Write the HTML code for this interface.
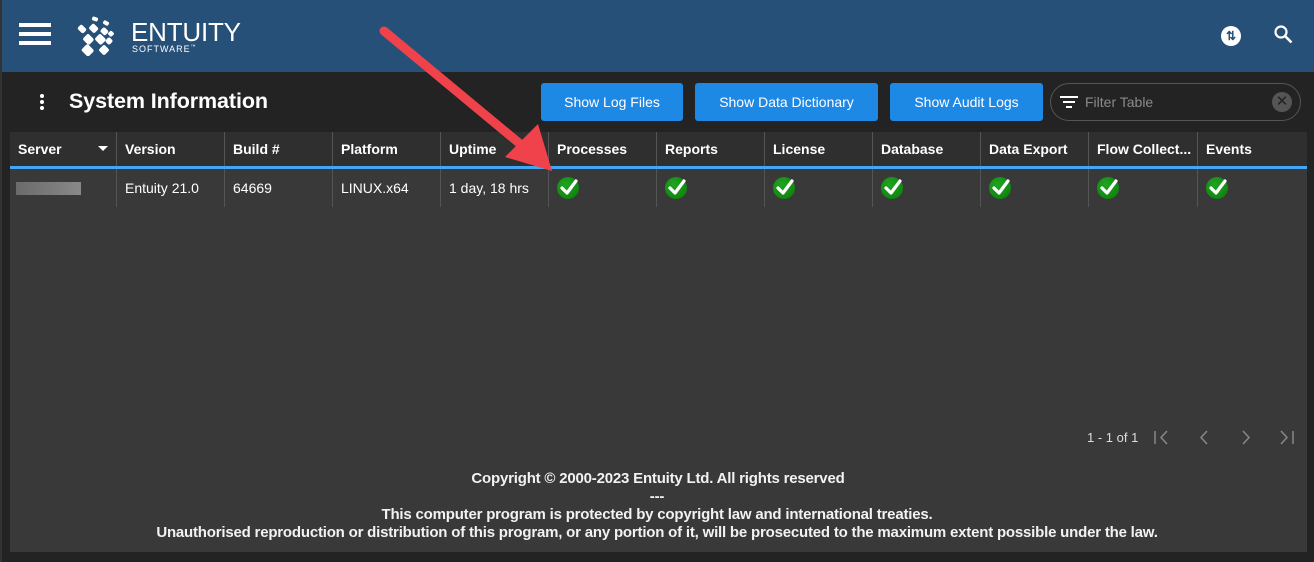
<!DOCTYPE html>
<html><head><meta charset="utf-8"><style>
*{margin:0;padding:0;box-sizing:border-box}
body{width:1314px;height:562px;background:#232323;font-family:"Liberation Sans",sans-serif;position:relative;overflow:hidden;color:#fff}
.hdr{position:absolute;left:0;top:0;width:1314px;height:72px;background:#265077}
.abs{position:absolute}
.btn{position:absolute;top:83px;height:38px;background:#1e88e5;border-radius:3px;color:#fff;font-size:14px;text-align:center;line-height:38px}
.panel{position:absolute;left:10px;top:132px;width:1297px;height:420px;background:#393939}
.th{position:absolute;top:0;height:34px;background:#2f2f2f;font-weight:bold;font-size:14px;line-height:34px;padding-left:8px;border-right:1px solid #555}
.td{position:absolute;top:37px;height:38px;font-size:14px;line-height:38px;padding-left:8px;border-right:1px solid #555}
.ck{position:absolute;top:8px;left:8px;width:22px;height:22px;border-radius:50%;background:radial-gradient(circle at 40% 35%,#1fa51f,#0b7a0b)}
.copy{position:absolute;left:0;width:1314px;text-align:center;font-weight:bold;font-size:15px;letter-spacing:-0.2px;color:#f2f2f2}
</style></head><body>
<div class="hdr"></div>
<div class="abs" style="left:0;top:0;width:2px;height:562px;background:#333"></div>
<div class="abs" style="left:19px;top:23px;width:32px;height:4px;background:#fff"></div>
<div class="abs" style="left:19px;top:32px;width:32px;height:4px;background:#fff"></div>
<div class="abs" style="left:19px;top:41px;width:32px;height:4px;background:#fff"></div>
<svg class="abs" style="left:74px;top:14px" width="50" height="42" viewBox="0 0 50 42">
<g fill="#fff">
<rect x="18" y="3" width="6" height="4" rx="1.5" transform="rotate(20 21 5)"/>
<rect x="29" y="7" width="6" height="4" rx="1.5" transform="rotate(30 32 9)"/>
<rect x="4" y="12" width="8" height="6" rx="2" transform="rotate(45 8 15)"/>
<rect x="16" y="11" width="8" height="7" rx="2" transform="rotate(45 20 14)"/>
<rect x="27" y="14" width="7" height="6" rx="2" transform="rotate(45 30 17)"/>
<rect x="35" y="17" width="5" height="5" rx="1.5" transform="rotate(45 37 19)"/>
<rect x="10" y="21" width="9" height="8" rx="2" transform="rotate(45 14 25)"/>
<rect x="22" y="21" width="9" height="8" rx="2" transform="rotate(45 26 25)"/>
<rect x="32" y="24" width="6" height="6" rx="2" transform="rotate(45 35 27)"/>
<rect x="9" y="32" width="10" height="9" rx="2" transform="rotate(45 14 36)"/>
<rect x="26" y="32" width="8" height="8" rx="2" transform="rotate(45 30 36)"/>
</g></svg>
<div class="abs" style="left:131px;top:17px;font-size:26px;letter-spacing:-0.2px;color:#fff">ENTUITY</div>
<div class="abs" style="left:132px;top:44px;font-size:9px;letter-spacing:1px;color:#fff">SOFTWARE<sup style="font-size:5px">™</sup></div>
<div class="abs" style="left:1221px;top:26px;width:20px;height:20px;border-radius:50%;background:#fff;color:#265077;font-size:12px;font-weight:bold;text-align:center;line-height:20px">⇅</div>
<svg class="abs" style="left:1273px;top:24px" width="22" height="22" viewBox="0 0 22 22"><circle cx="8" cy="8" r="5.5" fill="none" stroke="#fff" stroke-width="2.2"/><line x1="12" y1="12" x2="18.5" y2="18.5" stroke="#fff" stroke-width="2.6"/></svg>
<div class="abs" style="left:40px;top:94px;width:4px;height:4px;border-radius:50%;background:#fff;box-shadow:0 6px 0 #fff,0 12px 0 #fff"></div>
<div class="abs" style="left:69px;top:89px;font-size:21.5px;font-weight:bold;letter-spacing:-0.1px">System Information</div>
<div class="btn" style="left:541px;width:142px">Show Log Files</div>
<div class="btn" style="left:695px;width:183px">Show Data Dictionary</div>
<div class="btn" style="left:890px;width:153px">Show Audit Logs</div>
<div class="abs" style="left:1050px;top:83px;width:251px;height:38px;border:1px solid #555;border-radius:19px;background:#232323"></div>
<div class="abs" style="left:1060px;top:96px;width:18px;height:2px;background:#fff"></div>
<div class="abs" style="left:1063px;top:101px;width:12px;height:2px;background:#fff"></div>
<div class="abs" style="left:1066px;top:106px;width:6px;height:2px;background:#fff"></div>
<div class="abs" style="left:1085px;top:94px;font-size:14px;color:#8a8a8a">Filter Table</div>
<div class="abs" style="left:1272px;top:92px;width:20px;height:20px;border-radius:50%;background:#555;color:#222;text-align:center;line-height:20px;font-size:15px">✕</div>
<div class="panel">
<div class="th" style="left:0;width:107px">Server<span style="position:absolute;left:88px;top:14px;border-left:5px solid transparent;border-right:5px solid transparent;border-top:5px solid #fff"></span></div>
<div class="th" style="left:107px;width:108px">Version</div>
<div class="th" style="left:215px;width:108px">Build #</div>
<div class="th" style="left:323px;width:108px">Platform</div>
<div class="th" style="left:431px;width:108px">Uptime</div>
<div class="th" style="left:539px;width:108px">Processes</div>
<div class="th" style="left:647px;width:108px">Reports</div>
<div class="th" style="left:755px;width:108px">License</div>
<div class="th" style="left:863px;width:108px">Database</div>
<div class="th" style="left:971px;width:108px">Data Export</div>
<div class="th" style="left:1079px;width:109px">Flow Collect...</div>
<div class="th" style="left:1188px;width:109px;border-right:none">Events</div>
<div class="abs" style="left:0;top:34px;width:1297px;height:3px;background:#42a5f5"></div>
<div class="td" style="left:0;width:107px"><div style="position:absolute;left:6px;top:13px;width:65px;height:13px;background:linear-gradient(90deg,#6b6b6b,#888)"></div></div>
<div class="td" style="left:107px;width:108px">Entuity 21.0</div>
<div class="td" style="left:215px;width:108px">64669</div>
<div class="td" style="left:323px;width:108px">LINUX.x64</div>
<div class="td" style="left:431px;width:108px">1 day, 18 hrs</div>
<div class="td" style="left:539px;width:108px"><div class="ck"></div></div>
<div class="td" style="left:647px;width:108px"><div class="ck"></div></div>
<div class="td" style="left:755px;width:108px"><div class="ck"></div></div>
<div class="td" style="left:863px;width:108px"><div class="ck"></div></div>
<div class="td" style="left:971px;width:108px"><div class="ck"></div></div>
<div class="td" style="left:1079px;width:109px"><div class="ck"></div></div>
<div class="td" style="left:1188px;width:109px;border-right:none"><div class="ck"></div></div>
</div>
<svg class="abs" style="left:0;top:0" width="1314" height="562">
<g fill="none" stroke="#fff" stroke-width="3.2" stroke-linecap="round" stroke-linejoin="round">
<polyline points="562,188 567,193 576,181"/><polyline points="670,188 675,193 684,181"/><polyline points="778,188 783,193 792,181"/><polyline points="886,188 891,193 900,181"/><polyline points="994,188 999,193 1008,181"/><polyline points="1102,188 1107,193 1116,181"/><polyline points="1211,188 1216,193 1225,181"/>
</g>
<line x1="384" y1="31" x2="525" y2="148" stroke="#f0424a" stroke-width="9" stroke-linecap="round"/>
<polygon points="552,171 505,157 538,124" fill="#f0424a"/>
<g stroke="#888" stroke-width="1.5" fill="none"><line x1="1155" y1="431" x2="1155" y2="444"/><polyline points="1167,431 1161,437.5 1167,444"/><polyline points="1207,431 1201,437.5 1207,444"/><polyline points="1243,431 1249,437.5 1243,444"/><polyline points="1281,431 1287,437.5 1281,444"/><line x1="1293" y1="431" x2="1293" y2="444"/></g>
</svg>
<div class="abs" style="left:1087px;top:430px;font-size:13px;color:#ddd">1 - 1 of 1</div>
<div class="copy" style="top:470px;left:1px">Copyright © 2000-2023 Entuity Ltd. All rights reserved</div>
<div class="copy" style="top:488px">---</div>
<div class="copy" style="top:506px">This computer program is protected by copyright law and international treaties.</div>
<div class="copy" style="top:524px">Unauthorised reproduction or distribution of this program, or any portion of it, will be prosecuted to the maximum extent possible under the law.</div>
</body></html>
